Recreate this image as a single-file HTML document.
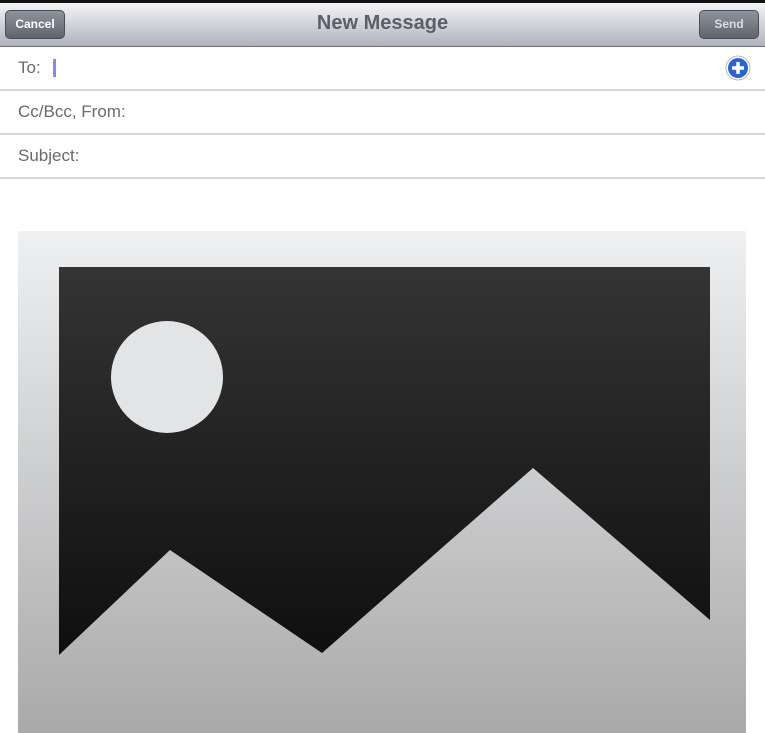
<!DOCTYPE html><html><head><style>
body{margin:0;width:765px;height:733px;overflow:hidden;background:#fff;font-family:"Liberation Sans",sans-serif;position:relative}
.nav{position:absolute;left:0;top:0;width:765px;height:47px;background:linear-gradient(#f4f5f7,#c9ccd3 60%,#b0b4bd);border-top:3px solid #111;box-sizing:border-box;border-bottom:1px solid #6d717a}
.btn{position:absolute;top:7px;height:29px;border-radius:5px;background:linear-gradient(#8e939c,#5f646d);border:1px solid #4a4e55;box-sizing:border-box;color:#fff;font-size:12px;font-weight:bold;line-height:27px;text-align:center}
.title{position:absolute;top:9px;width:765px;text-align:center;font-size:20px;font-weight:bold;color:#5a5f68}
.row{position:absolute;left:0;width:765px;height:44px;border-bottom:2px solid #d7d7d7;box-sizing:border-box;color:#6a6a6a;font-size:17px;padding-left:18px;line-height:42px}
</style></head><body>
<div class="nav"><div class="btn" style="left:5px;width:60px">Cancel</div><div class="title">New Message</div><div class="btn" style="left:699px;width:60px;color:#d9dce0">Send</div></div>
<div class="row" style="top:47px;height:44px">To:<span style="position:absolute;left:53px;top:12px;width:3px;height:18px;background:#7b8ff0"></span>
<svg style="position:absolute;left:725px;top:8px" width="26" height="26" viewBox="0 0 26 26"><circle cx="13" cy="13" r="12" fill="#fff" stroke="#bbb"/><circle cx="13" cy="13" r="10" fill="#2a63d6"/><path d="M7 13h12M13 7v12" stroke="#fff" stroke-width="3.5"/></svg></div>
<div class="row" style="top:91px">Cc/Bcc, From:</div>
<div class="row" style="top:135px">Subject:</div>
<div style="position:absolute;left:18px;top:231px;width:728px;height:502px;background:linear-gradient(#eef0f2,#a9a9a9)"></div>
<svg style="position:absolute;left:0;top:0" width="765" height="733"><defs><linearGradient id="d" x1="0" y1="0" x2="0" y2="1"><stop offset="0" stop-color="#343434"/><stop offset="1" stop-color="#0f0f0f"/></linearGradient></defs>
<path d="M59 267H710V620L533 468L322 653L170 550L59 655Z" fill="url(#d)"/>
<circle cx="167" cy="377" r="56" fill="#e3e4e5"/></svg>
</body></html>
